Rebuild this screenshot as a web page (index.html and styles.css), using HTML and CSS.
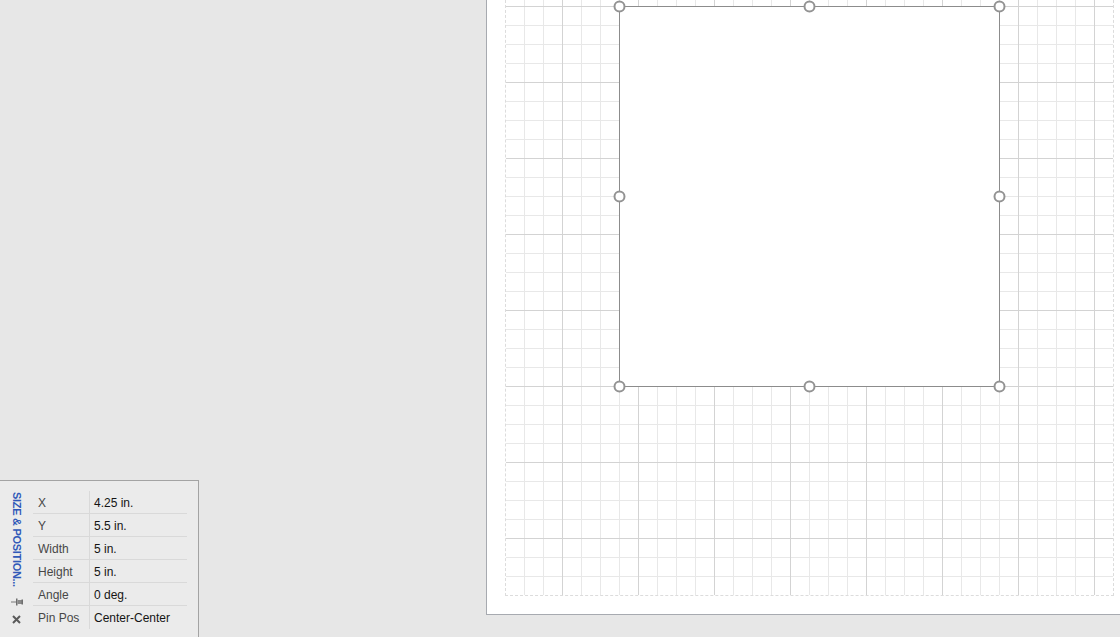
FILE: index.html
```html
<!DOCTYPE html>
<html>
<head>
<meta charset="utf-8">
<link rel="stylesheet" href="styles.css">
</head>
<body>
<div class="app">
  <div class="side">
    <div class="panel">
      <div class="rail">
        <span class="rail-title">SIZE &amp; POSITION...</span>
        <svg class="pin" width="12" height="8" viewBox="0 0 12 8">
          <rect x="0" y="3.5" width="6" height="1" fill="#7a7a7a"/>
          <rect x="5" y="0.5" width="1.5" height="7" fill="#6e6e6e"/>
          <rect x="6.5" y="2" width="5" height="4" fill="#8a8a8a"/>
          <rect x="10.5" y="1.5" width="1.5" height="5" fill="#6e6e6e"/>
        </svg>
        <svg class="close" width="9" height="9" viewBox="0 0 9 9">
          <path d="M1 1 L8 8 M8 1 L1 8" stroke="#5a5a5a" stroke-width="2" fill="none"/>
        </svg>
      </div>
      <div class="props">
        <div class="row"><span class="k">X</span><span class="v">4.25 in.</span></div>
        <div class="row"><span class="k">Y</span><span class="v">5.5 in.</span></div>
        <div class="row"><span class="k">Width</span><span class="v">5 in.</span></div>
        <div class="row"><span class="k">Height</span><span class="v">5 in.</span></div>
        <div class="row"><span class="k">Angle</span><span class="v">0 deg.</span></div>
        <div class="row"><span class="k">Pin Pos</span><span class="v">Center-Center</span></div>
      </div>
    </div>
  </div>
  <div class="stage">
    <div class="page">
      <div class="grid">
        <svg class="shape" width="393" height="393" viewBox="0 0 393 393">
          <rect x="6.5" y="6.5" width="380" height="380" fill="#ffffff" stroke="#8c8c8c" stroke-width="1"/>
          <g fill="#ffffff" stroke="#939393" stroke-width="2">
            <circle cx="6.5" cy="6.5" r="5"/>
            <circle cx="196.5" cy="6.5" r="5"/>
            <circle cx="386.5" cy="6.5" r="5"/>
            <circle cx="6.5" cy="196.5" r="5"/>
            <circle cx="386.5" cy="196.5" r="5"/>
            <circle cx="6.5" cy="386.5" r="5"/>
            <circle cx="196.5" cy="386.5" r="5"/>
            <circle cx="386.5" cy="386.5" r="5"/>
          </g>
        </svg>
      </div>
    </div>
  </div>
</div>
</body>
</html>
```
FILE: styles.css
```css
html, body {
  margin: 0;
  padding: 0;
}
body {
  background: #e7e7e7;
  font-family: "Liberation Sans", Arial, sans-serif;
  overflow: hidden;
}
.app {
  display: flex;
  width: 1120px;
  height: 637px;
  overflow: hidden;
}
.side {
  flex: none;
  width: 486px;
  display: flex;
  flex-direction: column;
  justify-content: flex-end;
}
.panel {
  box-sizing: border-box;
  width: 199px;
  height: 157px;
  border-top: 1px solid #a3a3a3;
  border-right: 1px solid #a3a3a3;
  background: #ebebeb;
  display: flex;
}
.rail {
  flex: none;
  width: 33px;
  display: flex;
  flex-direction: column;
  align-items: center;
  padding-top: 11px;
}
.rail-title {
  writing-mode: vertical-rl;
  font-weight: bold;
  font-size: 11px;
  line-height: 12px;
  letter-spacing: -0.3px;
  color: #3159b8;
  white-space: nowrap;
}
.pin {
  display: block;
  margin-top: 11px;
}
.close {
  display: block;
  margin-top: 9px;
}
.props {
  margin-top: 10px;
  width: 154px;
  font-size: 12px;
}
.row {
  display: flex;
  height: 23px;
  box-sizing: border-box;
  border-bottom: 1px solid #d9d9d9;
}
.row:last-child {
  border-bottom: none;
}
.k {
  box-sizing: border-box;
  flex: none;
  width: 57px;
  padding: 3px 0 0 5px;
  line-height: 18px;
  color: #474747;
  border-right: 1px solid #d9d9d9;
  white-space: nowrap;
}
.v {
  padding: 3px 0 0 4px;
  line-height: 18px;
  color: #141414;
  white-space: nowrap;
}
.stage {
  flex: none;
  display: flex;
  align-items: flex-start;
}
.page {
  flex: none;
  box-sizing: border-box;
  width: 647px;
  height: 615px;
  background: #ffffff;
  border-left: 1px solid #a7aab0;
  border-bottom: 1px solid #a7aab0;
  padding: 0 0 18px 18px;
}
.grid {
  position: relative;
  box-sizing: border-box;
  width: 609px;
  height: 596px;
  border-left: 1px dashed #dcdcdc;
  border-right: 1px dashed #dcdcdc;
  border-bottom: 1px dashed #dcdcdc;
  background-color: #ffffff;
  background-image:
    linear-gradient(to right, #d3d3d3 1px, transparent 1px),
    linear-gradient(to bottom, #d3d3d3 1px, transparent 1px),
    linear-gradient(to right, #e8e8e8 1px, transparent 1px),
    linear-gradient(to bottom, #e8e8e8 1px, transparent 1px);
  background-size: 76px 100%, 100% 76px, 19px 100%, 100% 19px;
  background-position: 57px 0, 0 6px, 0 0, 0 6px;
  background-origin: border-box;
  background-clip: padding-box;
}
.shape {
  position: absolute;
  left: 107px;
  top: 0;
  display: block;
}
```
